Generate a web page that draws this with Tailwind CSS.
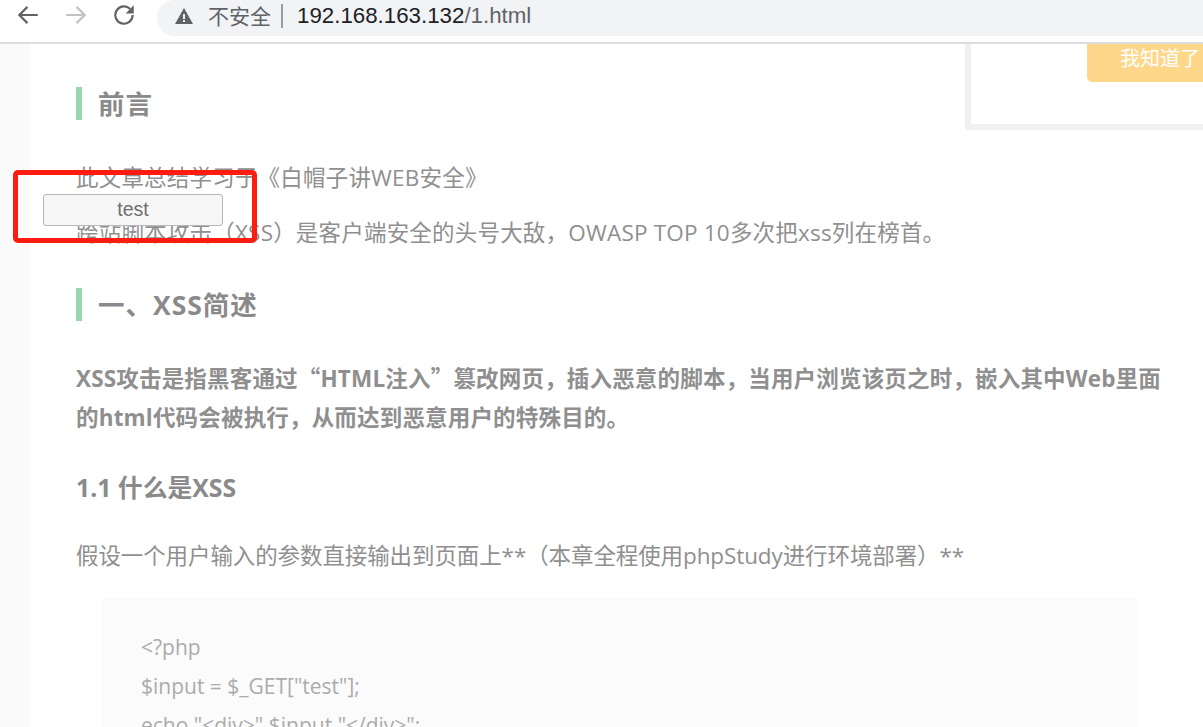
<!DOCTYPE html>
<html lang="zh-CN">
<head>
    <meta charset="UTF-8">
    <title>1.html</title>
    <script src="https://cdn.jsdelivr.net/npm/@tailwindcss/browser@4"></script>
</head>
<body class="w-[1203px] h-[727px] overflow-hidden bg-white relative font-['Open_Sans','Noto_Sans_CJK_SC',sans-serif] [text-spacing-trim:space-all]">
    <!-- browser toolbar -->
    <div class="h-[44px] border-b-2 border-[#dadce0] bg-white flex items-start">
        <div class="flex items-center h-[30px] pl-[15px] gap-[22px]">
            <svg class="w-[26px] h-[26px]" viewBox="0 0 24 24" fill="none" stroke="#5f6368" stroke-width="2"><path d="M21 12H4M11.500 4.500 4 12l7.500 7.500"/></svg>
            <svg class="w-[26px] h-[26px]" viewBox="0 0 24 24" fill="none" stroke="#c0c2c5" stroke-width="2"><path d="M3 12h17M12.500 4.500 20 12l-7.500 7.500"/></svg>
            <svg class="w-[26px] h-[26px]" viewBox="0 0 24 24" fill="none" stroke="#5f6368" stroke-width="2"><path d="M20 12a8 8 0 1 1-2.300-5.600"/><path d="M21 3v7.500h-7.500z" fill="#5f6368" stroke="none"/></svg>
        </div>
        <div class="ml-[20px] flex-1 h-[36px] bg-[#f1f3f4] rounded-l-[18px] flex items-center pb-[4px] pl-[17px] font-['Liberation_Sans','Noto_Sans_CJK_SC',sans-serif] text-[22.3px] leading-none">
            <svg class="w-[20px] h-[20px]" viewBox="0 0 20 20"><path d="M10 2 19 18H1z" fill="#5f6368"/><path d="M9 8h2v5H9zM9 14h2v2H9z" fill="#f1f3f4"/></svg>
            <span class="ml-[14px] text-[#5f6368] text-[21px]">不安全</span>
            <span class="ml-[10px] w-[2px] h-[24px] bg-[#9a9da0]"></span>
            <span class="ml-[14px] text-[#202124]">192.168.163.132<span class="text-[#5f6368]">/1.html</span></span>
        </div>
    </div>

    <!-- page -->
    <div class="flex">
        <div class="w-[30px] h-[683px] bg-[#fafafa] shrink-0"></div>
        <main class="pl-[46px] w-[1133px] shrink-0 text-[22.5px] leading-[38px] text-[#8f8f8f]">
            <h2 class="mt-[43px] h-[33px] border-l-[6px] border-[#98d8ae] pl-[16px] text-[26.500px] font-bold leading-[34px] text-[#8a8a8a] tracking-[1px]">前言</h2>
            <p class="mt-[39px] tracking-[0.2px]">此文章总结学习于《白帽子讲WEB安全》</p>
            <p class="mt-[17px] tracking-[0.2px]">跨站脚本攻击（XSS）是客户端安全的头号大敌，OWASP TOP 10多次把xss列在榜首。</p>
            <h2 class="mt-[36px] h-[33px] border-l-[6px] border-[#98d8ae] pl-[16px] text-[26.500px] font-bold leading-[34px] text-[#8a8a8a] tracking-[1px]">一、XSS简述</h2>
            <p class="mt-[37px] font-bold leading-[39px] text-[#8f8f8f] tracking-[0.18px]">XSS攻击是指黑客通过<span class="font-['Noto_Sans_CJK_SC',sans-serif]">“</span>HTML注入<span class="font-['Noto_Sans_CJK_SC',sans-serif]">”</span>篡改网页，插入恶意的脚本，当用户浏览该页之时，嵌入其中Web里面的html代码会被执行，从而达到恶意用户的特殊目的。</p>
            <h3 class="mt-[31px] text-[24.800px] font-bold leading-[38px] text-[#8a8a8a]">1.1 什么是XSS</h3>
            <p class="mt-[31px] tracking-[-0.1px]">假设一个用户输入的参数直接输出到页面上**（本章全程使用phpStudy进行环境部署）**</p>
            <pre class="mt-[23px] ml-[26px] w-[1035px] h-[200px] bg-[#fbfbfb] pt-[30px] pl-[39px] font-['Open_Sans','Noto_Sans_CJK_SC',sans-serif] text-[21px] leading-[39px] text-[#ababab]">&lt;?php
$input = $_GET["test"];
echo "&lt;div&gt;".$input."&lt;/div&gt;";</pre>
        </main>
    </div>

    <!-- dialog cut off at the top right -->
    <div class="absolute left-[965px] top-[44px] w-[260px] h-[86px] bg-white border-l-[6px] border-b-[6px] border-[#f0f0f0] rounded-bl-[3px]"></div>
    <div class="absolute left-[1087px] top-[44px] w-[140px] h-[38px] bg-[#fed78a] rounded-bl-[5px] text-white text-[20px] leading-[30px] pl-[33px] whitespace-nowrap">我知道了</div>

    <!-- injected button and red annotation -->
    <button class="absolute left-[43px] top-[194px] w-[180px] h-[32px] bg-[#f6f6f6] border border-[#b8b8b8] rounded-[3px] text-[19.500px] text-[#6f6f6f] font-['Liberation_Sans',sans-serif] leading-none">test</button>
    <div class="absolute left-[13px] top-[170px] w-[244px] h-[73px] border-[5px] border-[#fe1c10] rounded-[5px]"></div>
</body>
</html>
